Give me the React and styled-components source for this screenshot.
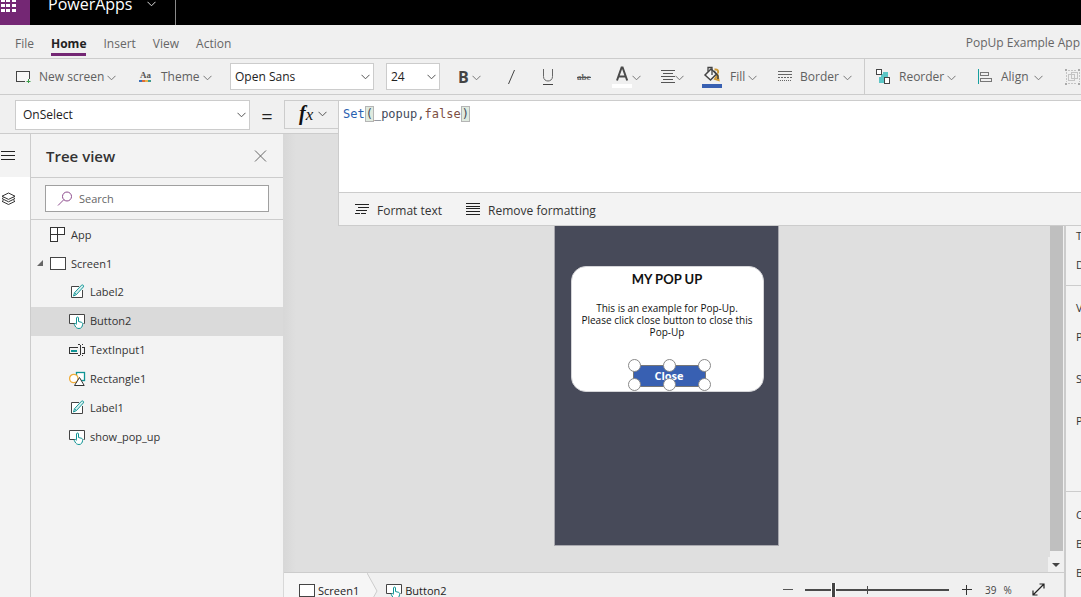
import React from "react";
import styled, { createGlobalStyle } from "styled-components";

const GlobalStyle = createGlobalStyle`
  *, *::before, *::after { box-sizing: border-box; }
  body {
    margin: 0;
    overflow: hidden;
    background: #f0f0f0;
    color: #333;
    font: 12px/16px "Open Sans", "Noto Sans", sans-serif;
  }
  button, select, input { font: inherit; color: inherit; }
  button { border: 0; padding: 0; background: none; cursor: pointer; }
  svg { display: block; flex: none; }
`;

const line = "#cccccc";

const Shell = styled.div`
  display: flex;
  flex-direction: column;
  height: calc(100vh + 12px);
`;

/* ---------- title bar ---------- */

const TitleBar = styled.header`
  display: flex;
  align-items: center;
  flex: none;
  height: 40px;
  margin-top: -15px;
  background: #000;
  color: #fff;
`;

const Waffle = styled.button`
  display: flex;
  align-items: center;
  width: 30px;
  height: 100%;
  background: #742774;
`;

const AppName = styled.button`
  display: flex;
  align-items: center;
  gap: 14px;
  width: 146px;
  height: 100%;
  padding: 0 0 2px 18px;
  border-right: 1px solid #8a8a8a;
  font-size: 16px;
  line-height: 20px;
`;

/* ---------- menu tabs ---------- */

const MenuRow = styled.nav`
  display: flex;
  align-items: flex-start;
  justify-content: space-between;
  flex: none;
  height: 34px;
  padding: 10px 1px 0 15px;
  border-bottom: 1px solid ${line};
  color: #666;
`;

const Tabs = styled.div`
  display: flex;
  gap: 17px;
  padding-top: 1px;
`;

const Tab = styled.a`
  padding-bottom: 1px;
  border-bottom: 3px solid ${(p) => (p.$active ? "#742774" : "transparent")};
  color: ${(p) => (p.$active ? "#222" : "#666")};
  font-weight: ${(p) => (p.$active ? 700 : 400)};
  text-decoration: none;
`;

/* ---------- toolbar ---------- */

const Toolbar = styled.div`
  display: flex;
  align-items: center;
  flex: none;
  gap: 18px;
  height: 36px;
  padding-left: 16px;
  border-bottom: 1px solid ${line};
  color: #606060;
`;

const ToolGroup = styled.div`
  display: flex;
  align-items: center;
  flex: none;
  gap: ${(p) => p.$gap}px;
  height: 100%;
`;

const Divided = styled(ToolGroup)`
  margin-left: -6px;
  padding-left: 11px;
  border-left: 1px solid ${line};
`;

const ToolButton = styled.button`
  display: flex;
  align-items: center;
  flex: none;
  gap: 3px;
  width: ${(p) => p.$w}px;
  height: 28px;
  white-space: nowrap;

  & > svg:first-child { margin-right: 5px; }
  & > svg:last-child:not(:first-child) { margin: 3px 0 0 auto; }
`;

const GlyphButton = styled(ToolButton)`
  gap: 0;
  justify-content: center;
  color: #444;
  font-size: 16px;

  & > svg:first-child { margin-right: 0; }
`;

const SelectBox = styled.span`
  position: relative;
  display: block;
  flex: none;
  width: ${(p) => p.$w}px;
  height: ${(p) => p.$h}px;

  select {
    width: 100%;
    height: 100%;
    padding: 0 18px 0 ${(p) => p.$pad}px;
    border: 1px solid ${line};
    border-radius: 0;
    background: #fff;
    color: #222;
    appearance: none;
  }

  svg {
    position: absolute;
    top: calc(50% - 3px);
    right: 4px;
    pointer-events: none;
  }
`;

/* ---------- formula bar ---------- */

const FormulaRow = styled.div`
  display: flex;
  align-items: flex-start;
  flex: none;
  height: 39px;
  padding: 5px 0 0 15px;
  border-bottom: 1px solid ${line};
`;

const EqualSign = styled.span`
  width: 34px;
  color: #222;
  font-size: 20px;
  line-height: 34px;
  text-align: center;
`;

const FxButton = styled.button`
  display: flex;
  align-items: center;
  gap: 5px;
  width: 54px;
  height: 29px;
  padding: 0 0 2px 14px;
  border: 1px solid ${line};
  border-right: 0;
  color: #111;
  font: italic bold 20px/24px "Liberation Serif", serif;

  small { font-size: 17px; font-weight: 400; }
`;

const FormulaSlot = styled.div`
  position: relative;
  flex: 1;
`;

const FormulaPanel = styled.div`
  position: absolute;
  z-index: 2;
  top: 0;
  left: 0;
  right: 0;
  border: 1px solid ${line};
  border-right: 0;
  background: #f3f3f3;
`;

const Editor = styled.code`
  display: block;
  height: 92px;
  padding: 4px;
  border-bottom: 1px solid ${line};
  background: #fff;
  color: #444a5a;
  font: 12px/18px "DejaVu Sans Mono", "Liberation Mono", monospace;
  outline: none;
`;

const Fn = styled.span`
  color: #2a61b0;
`;

const Literal = styled.span`
  color: #7d4f43;
`;

const Bracket = styled.span`
  border: 1px solid #b5b5b5;
  background: #dfeadf;
`;

const FormatRow = styled.div`
  display: flex;
  gap: 24px;
  height: 32px;
  padding: 3px 0 0 16px;

  button {
    display: flex;
    align-items: center;
    gap: 7px;
  }
  svg { margin-bottom: 3px; }
`;

/* ---------- body ---------- */

const Body = styled.div`
  display: flex;
  flex: 1;
  min-height: 0;
`;

const Rail = styled.nav`
  flex: none;
  width: 31px;
  border-right: 1px solid ${line};
  background: #f3f3f3;
`;

const RailButton = styled.button`
  display: flex;
  align-items: center;
  width: 30px;
  height: 43px;
  background: ${(p) => (p.$active ? "#fff" : "transparent")};
`;

const TreePanel = styled.aside`
  flex: none;
  width: 252px;
  background: #f3f3f3;
`;

const TreeHeader = styled.div`
  display: flex;
  align-items: center;
  justify-content: space-between;
  height: 44px;
  padding: 0 16px 0 15px;
  border-bottom: 1px solid ${line};

  h2 {
    margin: 0;
    font-size: 15px;
    line-height: 20px;
    font-weight: 600;
  }
`;

const SearchArea = styled.div`
  height: 42px;
  padding: 7px 14px;
  border-bottom: 1px solid ${line};
`;

const SearchBox = styled.label`
  display: flex;
  align-items: center;
  gap: 6px;
  height: 27px;
  padding-left: 11px;
  border: 1px solid #a0a0a0;
  background: #fff;

  input {
    flex: 1;
    min-width: 0;
    padding: 0;
    border: 0;
    outline: 0;
    background: none;
    font-size: 11px;
  }
  input::placeholder { color: #666; opacity: 1; }
`;

const Tree = styled.ul`
  margin: 0;
  padding: 0;
  list-style: none;
`;

const TreeItem = styled.button`
  display: flex;
  align-items: center;
  gap: 4px;
  width: 100%;
  height: 29px;
  padding: 0 0 ${(p) => (p.$child ? 2 : 0)}px ${(p) => (p.$child ? 38 : 6)}px;
  background: ${(p) => (p.$selected ? "#dadada" : "transparent")};
  font-size: 11px;
  text-align: left;
`;

const Twisty = styled.span`
  display: block;
  width: 9px;
`;

const Stage = styled.main`
  display: flex;
  flex-direction: column;
  flex: 1;
  min-width: 0;
  border-left: 1px solid #d8d8d8;
`;

const CanvasRow = styled.div`
  display: flex;
  flex: 1;
  min-height: 0;
  background: linear-gradient(90deg, #d8d8d8, #dfdfdf 12px);
`;

const Canvas = styled.div`
  display: flex;
  justify-content: center;
  align-items: flex-start;
  flex: 1;
  padding: 13px 2px 0 0;
`;

const ScrollTrack = styled.div`
  display: flex;
  flex-direction: column;
  flex: none;
  width: 14px;
  background: #f0f0f0;
`;

const ScrollThumb = styled.div`
  flex: 1;
  margin: 0 1px 6px 0;
  background: #bfbfbf;
`;

const ScrollDown = styled.button`
  display: flex;
  align-items: center;
  justify-content: center;
  height: 15px;
  margin-left: -2px;
  background: #f0f0f0;
`;

const Phone = styled.div`
  width: 225px;
  height: 399px;
  padding: 118px 14px 0 16px;
  border: 1px solid #a8a8ae;
  background: #474a59;
`;

const PopUp = styled.section`
  display: flex;
  flex-direction: column;
  align-items: center;
  width: 193px;
  height: 126px;
  border: 1px solid #d5d5d8;
  border-radius: 15px;
  background: #fff;
  color: #111;
  text-align: center;

  h3 {
    margin: 3px 0 14px;
    font: bold 13px/18px Lato, sans-serif;
  }
  p {
    margin: 0 0 27px;
    font-size: 10px;
    line-height: 12px;
    white-space: nowrap;
  }
`;

const Selection = styled.div`
  position: relative;
  margin-left: 4px;
`;

const CloseButton = styled.button`
  display: block;
  width: 73px;
  height: 22px;
  border: 1px solid #777;
  background: #3860b2;
  color: #fff;
  font-size: 11px;
  font-weight: 700;
  line-height: 18px;
`;

const Handle = styled.i`
  position: absolute;
  left: ${(p) => p.$x}%;
  top: ${(p) => p.$y}%;
  width: 13px;
  height: 13px;
  margin: -6px;
  border: 1px solid #888;
  border-radius: 50%;
  background: #fff;
`;

/* ---------- status bar ---------- */

const StatusBar = styled.footer`
  display: flex;
  align-items: stretch;
  justify-content: space-between;
  flex: none;
  height: 37px;
  border-top: 1px solid ${line};
  color: #222;
  font-size: 11px;
`;

const Crumbs = styled.div`
  display: flex;
`;

const Crumb = styled.button`
  display: flex;
  align-items: center;
  gap: 2px;
  padding: 0 ${(p) => (p.$first ? 8 : 0)}px 0 ${(p) => p.$pad}px;
  background: ${(p) => (p.$first ? "#f6f6f6" : "transparent")};
`;

const ZoomTools = styled.div`
  display: flex;
  align-items: center;
  gap: 12px;
  padding: 0 19px 3px 0;
`;

const ZoomSlider = styled.input`
  width: 144px;
  height: 14px;
  margin: 0;
  appearance: none;
  background:
    linear-gradient(#4a4a4a, #4a4a4a) 62px 3px / 1px 8px no-repeat,
    linear-gradient(#4a4a4a, #4a4a4a) 0 6px / 100% 2px no-repeat;

  &::-webkit-slider-thumb {
    appearance: none;
    width: 5px;
    height: 14px;
    border: solid #fff;
    border-width: 0 1px;
    background: #444;
  }
`;

const ZoomValue = styled.span`
  display: flex;
  gap: 7px;
  width: 36px;
  padding-left: 1px;
  color: #444;
  font-size: 10px;
`;

/* ---------- properties strip ---------- */

const Properties = styled.aside`
  flex: none;
  width: 17px;
  overflow: hidden;
  border-left: 2px solid ${line};
  background: #f3f3f3;
`;

const PropGroup = styled.div`
  height: ${(p) => p.$h}px;
  padding: ${(p) => p.$top}px 0 0 10px;
  border-bottom: 1px solid ${line};
  font-size: 11px;
`;

const PropLabel = styled.div`
  margin-bottom: ${(p) => (p.$spaced ? 26 : 13)}px;
`;

/* ---------- icons ---------- */

const Chevron = ({ color = "#777" }) => (
  <svg width="9" height="6" viewBox="0 0 9 6" fill="none" stroke={color}>
    <path d="M.5 .8 4.5 4.8 8.5 .8" />
  </svg>
);

const ScreenIcon = () => (
  <svg width="17" height="14" viewBox="0 0 17 14" shapeRendering="crispEdges">
    <rect x=".5" y=".5" width="15" height="12" fill="#fff" stroke="#444" />
  </svg>
);

const AppIcon = () => (
  <svg width="17" height="16" viewBox="0 0 17 16" fill="#fff" stroke="#333" shapeRendering="crispEdges">
    <path d="M.5 .5h14v7h-14zM.5 7.5h7v7h-7zM7.5 .5v7" />
  </svg>
);

const LabelIcon = () => (
  <svg width="17" height="15" viewBox="0 0 17 15" fill="none">
    <path d="M10 2.500H2.500v11h11V6" fill="#fff" stroke="#444" />
    <path d="M4.500 12l1-3.300L12.500 1.200c1.200-.9 2.700.4 1.900 1.700L7.400 10.600z" fill="#d5eeee" stroke="#1a9a9a" />
    <path d="M5.500 8.700l1.900 1.900" stroke="#1a9a9a" />
  </svg>
);

const ButtonIcon = () => (
  <svg width="17" height="16" viewBox="0 0 17 16" fill="none">
    <path d="M6 10.500H.5v-9h15v9h-1" fill="#fff" stroke="#444" />
    <path d="M7.500 10.500V5c0-1.300 2-1.300 2 0v3.500l3 .8c1 .3 1.300 1 1.100 2-.2 2.500-1.300 4.200-3.600 4.200-2 0-3.100-1-3.900-2.500l-.8-1.500c0-1.300 1.500-1.200 2.200-.3z" fill="#fff" stroke="#0f9494" />
  </svg>
);

const TextInputIcon = () => (
  <svg width="17" height="14" viewBox="0 0 17 14" fill="none" stroke="#333" shapeRendering="crispEdges">
    <path d="M9 4.500H.5v6H9M13 4.500h2.500v6H13M11.500 2v10M9 1.500h1.500M12.500 1.500H14M9 12.500h1.500M12.500 12.500H14" />
    <path d="M2 7.500h6" stroke="#0f9494" strokeWidth="2" />
  </svg>
);

const ShapeIcon = () => (
  <svg width="17" height="16" viewBox="0 0 17 16" fill="none">
    <rect x="7.500" y="1.500" width="8" height="8" fill="#fff" stroke="#0f9494" strokeWidth="1.300" />
    <circle cx="4.800" cy="7.500" r="4.200" fill="#fff" stroke="#f0ad3a" strokeWidth="1.300" />
    <path d="M10.500 6.500 15.200 14.500H5.500z" fill="#fff" stroke="#333" />
  </svg>
);

const WaffleIcon = () => (
  <svg width="17" height="16" viewBox="0 0 17 16" fill="#fff" shapeRendering="crispEdges">
    {[1, 6, 12].map((x) => [2, 7, 12].map((y) => (
      <rect key={`${x}-${y}`} x={x} y={y} width="4" height="3" />
    )))}
  </svg>
);

const NewScreenIcon = () => (
  <svg width="15" height="13" viewBox="0 0 15 13" fill="none">
    <path d="M9 11.500H.5v-10h13V9" fill="#f7f7f7" stroke="#444" shapeRendering="crispEdges" />
    <path d="M12.500 9v4M10.500 11.500h4" stroke="#3d9f4a" />
  </svg>
);

const ThemeIcon = () => (
  <svg width="14" height="13" viewBox="0 0 14 13">
    <text x="1" y="8" fontFamily="Liberation Serif, serif" fontSize="9" fontWeight="700" fill="#555">Aa</text>
    <path d="M0 10h3v2H0z" fill="#3c6fb5" />
    <path d="M3 10h3v2H3z" fill="#dd6b3a" />
    <path d="M6 10h3v2H6z" fill="#e9b44c" />
    <path d="M9 10h3v2H9z" fill="#3f9b8f" />
  </svg>
);

const ItalicIcon = () => (
  <svg width="9" height="16" viewBox="0 0 9 16" stroke="#444">
    <path d="M7.500 1 1.500 15" />
  </svg>
);

const UnderlineIcon = () => (
  <svg width="12" height="16" viewBox="0 0 12 16" fill="none" stroke="#666">
    <path d="M1.500 0v7.500c0 6 9 6 9 0V0" />
    <path d="M1 15.500h10" stroke="#444" />
  </svg>
);

const StrikeIcon = () => (
  <svg width="15" height="12" viewBox="0 0 15 12">
    <text x="0" y="9" fontSize="9" fontFamily="Liberation Serif, serif" fontWeight="700" fill="#666">abc</text>
    <path d="M0 6.500h14" stroke="#555" />
  </svg>
);

const FontColorIcon = () => (
  <svg width="20" height="22" viewBox="0 0 20 22">
    <path d="M0 18h20v4H0z" fill="#fff" />
    <path d="M5 14.500 9.600 1.500h1l4.600 13M6.600 10.500h7" fill="none" stroke="#4a4a4a" strokeWidth="2" />
  </svg>
);

const AlignTextIcon = () => (
  <svg width="14" height="13" viewBox="0 0 14 13" stroke="#555" shapeRendering="crispEdges">
    <path d="M0 .5h14M2 3.500h10M0 6.500h14M2 9.500h10M0 12.500h14" />
  </svg>
);

const FillIcon = () => (
  <svg width="20" height="22" viewBox="0 0 20 22" fill="none">
    <path d="M0 18h20v4H0z" fill="#3860b2" />
    <path d="M12.500 3.500c3-.5 4 1 3.500 3.500M13 13l2.500-4 1 5z" stroke="#d09a35" strokeWidth="2" />
    <path d="M3 9 9 3l5.500 5-6 6z" fill="#f5f5f5" stroke="#444" strokeWidth="1.500" />
    <path d="M6 5.500V1.500h4V9" stroke="#444" strokeWidth="1.300" />
    <path d="M12 5l4 5v3" stroke="#444" strokeWidth="1.500" />
  </svg>
);

const BorderIcon = () => (
  <svg width="14" height="11" viewBox="0 0 14 11" stroke="#666" shapeRendering="crispEdges">
    <path d="M0 .5h14M0 3.500h14" />
    <path d="M0 6.500h14" strokeDasharray="2 1" />
    <path d="M0 9.500h14" strokeDasharray="1 1" />
  </svg>
);

const ReorderIcon = () => (
  <svg width="15" height="15" viewBox="0 0 15 15" shapeRendering="crispEdges">
    <path d="M7 3h5v5H7zM3 8h5v6H3z" fill="#5cc6c6" />
    <path d="M5 5h5v6H5z" fill="#5cc6c6" />
    <path d="M.5 .5h5v5h-5zM8.500 8.500h5v6h-5z" fill="#fff" stroke="#444" />
  </svg>
);

const AlignIcon = () => (
  <svg width="15" height="15" viewBox="0 0 15 15" fill="none" shapeRendering="crispEdges">
    <path d="M0 0h1v15H0z" fill="#16a0a0" />
    <path d="M2.500 3.500h8v3h-8zM2.500 9.500h11v3h-11z" stroke="#777" />
  </svg>
);

const GroupIcon = () => (
  <svg width="16" height="16" viewBox="0 0 16 16" fill="none" stroke="#c4c4c4" shapeRendering="crispEdges">
    <path d="M3 1.500h9M3 14.500h9M1.500 3v10M14.500 3v10" strokeDasharray="2 1" />
    <path d="M3.500 5.500h6v6h-6zM6.500 3.500h6v6h-6z" />
    <path d="M0 0h2v2H0zM13 0h2v2h-2zM0 14h2v2H0zM13 14h2v2h-2z" fill="#aaa" stroke="none" />
  </svg>
);

const FormatIcon = () => (
  <svg width="15" height="11" viewBox="0 0 15 11" stroke="#222" shapeRendering="crispEdges">
    <path d="M0 .5h14M3 3.500h11M1 6.500h11M0 9.500h5M6 9.500h5" />
  </svg>
);

const RemoveFormatIcon = () => (
  <svg width="15" height="13" viewBox="0 0 15 13" stroke="#222" shapeRendering="crispEdges">
    <path d="M0 .5h14M0 3.500h14M0 5.500h14M0 8.500h14M0 11.500h14" />
  </svg>
);

const MenuIcon = () => (
  <svg width="15" height="10" viewBox="0 0 15 10" stroke="#222" shapeRendering="crispEdges">
    <path d="M1 .5h14M1 4.500h14M1 8.500h14" />
  </svg>
);

const LayersIcon = () => (
  <svg width="16" height="14" viewBox="0 0 16 14" fill="none" stroke="#333">
    <path d="M8.500 1 15 4.200 8.500 7.400 2 4.200z" />
    <path d="M3.500 5.600 2 6.600l6.500 3.200L15 6.600l-1.500-1M3.500 8.400 2 9.300l6.500 3.200L15 9.300l-1.500-.9" />
  </svg>
);

const SearchIcon = () => (
  <svg width="16" height="16" viewBox="0 0 16 16" fill="none" stroke="#8d4b8d">
    <circle cx="10" cy="5.500" r="4.500" />
    <path d="M6.800 8.700 1 14.500" />
  </svg>
);

const CloseIcon = () => (
  <svg width="13" height="12" viewBox="0 0 13 12" stroke="#666">
    <path d="M1 .5l11 11M12 .5l-11 11" />
  </svg>
);

const CrumbArrow = () => (
  <svg width="12" height="36" viewBox="0 0 12 36">
    <path d="M0 0 10 18 0 36z" fill="#f6f6f6" />
    <path d="M0 0 10 18 0 36" fill="none" stroke="#ccc" />
  </svg>
);

const treeItems = [
  { name: "Label2", Icon: LabelIcon },
  { name: "Button2", Icon: ButtonIcon, selected: true },
  { name: "TextInput1", Icon: TextInputIcon },
  { name: "Rectangle1", Icon: ShapeIcon },
  { name: "Label1", Icon: LabelIcon },
  { name: "show_pop_up", Icon: ButtonIcon },
];

const handles = [[2, 0], [50, 0], [98, 0], [2, 88], [50, 88], [98, 88]];

const Dropdown = ({ label, value, width, height, pad = 4 }) => (
  <SelectBox $w={width} $h={height} $pad={pad}>
    <select aria-label={label} defaultValue={value}>
      <option>{value}</option>
    </select>
    <Chevron color="#555" />
  </SelectBox>
);

export default function App() {
  return (
    <Shell>
      <GlobalStyle />
      <TitleBar>
        <Waffle aria-label="App launcher"><WaffleIcon /></Waffle>
        <AppName>PowerApps <Chevron color="#ddd" /></AppName>
      </TitleBar>

      <MenuRow>
        <Tabs>
          {["File", "Home", "Insert", "View", "Action"].map((t) => (
            <Tab key={t} href="#" $active={t === "Home"}>{t}</Tab>
          ))}
        </Tabs>
        <span>PopUp Example App</span>
      </MenuRow>

      <Toolbar>
        <ToolGroup $gap={23}>
          <ToolButton $w={100}><NewScreenIcon />New screen<Chevron /></ToolButton>
          <ToolButton $w={73}><ThemeIcon />Theme<Chevron /></ToolButton>
        </ToolGroup>
        <ToolGroup $gap={12}>
          <Dropdown label="Font" value="Open Sans" width={144} height={27} />
          <Dropdown label="Font size" value="24" width={54} height={27} />
        </ToolGroup>
        <ToolGroup $gap={22}>
          <GlyphButton $w={23} aria-label="Bold"><b>B</b><Chevron /></GlyphButton>
          <GlyphButton $w={16} aria-label="Italic"><ItalicIcon /></GlyphButton>
          <GlyphButton $w={14} aria-label="Underline"><UnderlineIcon /></GlyphButton>
          <GlyphButton $w={14} aria-label="Strikethrough"><StrikeIcon /></GlyphButton>
          <GlyphButton $w={26} aria-label="Font color"><FontColorIcon /><Chevron /></GlyphButton>
          <GlyphButton $w={23} aria-label="Text alignment"><AlignTextIcon /><Chevron /></GlyphButton>
        </ToolGroup>
        <ToolGroup $gap={22}>
          <ToolButton $w={54}><FillIcon />Fill<Chevron /></ToolButton>
          <ToolButton $w={74}><BorderIcon />Border<Chevron /></ToolButton>
        </ToolGroup>
        <Divided $gap={22}>
          <ToolButton $w={80}><ReorderIcon />Reorder<Chevron /></ToolButton>
          <ToolButton $w={65}><AlignIcon />Align<Chevron /></ToolButton>
          <ToolButton $w={16} aria-label="Group"><GroupIcon /></ToolButton>
        </Divided>
      </Toolbar>

      <FormulaRow>
        <Dropdown label="Property" value="OnSelect" width={235} height={30} pad={7} />
        <EqualSign>=</EqualSign>
        <FxButton aria-label="Function"><span>f<small>x</small></span><Chevron color="#555" /></FxButton>
        <FormulaSlot>
          <FormulaPanel>
            <Editor role="textbox" aria-label="Formula" contentEditable suppressContentEditableWarning spellCheck={false}>
              <Fn>Set</Fn><Bracket>(</Bracket>_popup,<Literal>false</Literal><Bracket>)</Bracket>
            </Editor>
            <FormatRow>
              <button><FormatIcon />Format text</button>
              <button><RemoveFormatIcon />Remove formatting</button>
            </FormatRow>
          </FormulaPanel>
        </FormulaSlot>
      </FormulaRow>

      <Body>
        <Rail>
          <RailButton aria-label="Menu"><MenuIcon /></RailButton>
          <RailButton $active aria-label="Tree view"><LayersIcon /></RailButton>
        </Rail>
        <TreePanel>
          <TreeHeader>
            <h2>Tree view</h2>
            <button aria-label="Close panel"><CloseIcon /></button>
          </TreeHeader>
          <SearchArea>
            <SearchBox>
              <SearchIcon />
              <input aria-label="Search" placeholder="Search" />
            </SearchBox>
          </SearchArea>
          <Tree>
            <li><TreeItem><Twisty /><AppIcon />App</TreeItem></li>
            <li>
              <TreeItem>
                <Twisty>
                  <svg width="7" height="7" viewBox="0 0 7 7"><path d="M6 0v6H0z" fill="#666" /></svg>
                </Twisty>
                <ScreenIcon />Screen1
              </TreeItem>
            </li>
            {treeItems.map(({ name, Icon, selected }) => (
              <li key={name}><TreeItem $child $selected={selected}><Icon />{name}</TreeItem></li>
            ))}
          </Tree>
        </TreePanel>

        <Stage>
          <CanvasRow>
            <Canvas>
              <Phone>
                <PopUp>
                  <h3>MY POP UP</h3>
                  <p>
                    This is an example for Pop-Up.<br />
                    Please click close button to close this<br />
                    Pop-Up
                  </p>
                  <Selection>
                    <CloseButton>Close</CloseButton>
                    {handles.map(([x, y]) => <Handle key={`${x}-${y}`} $x={x} $y={y} />)}
                  </Selection>
                </PopUp>
              </Phone>
            </Canvas>
            <ScrollTrack>
              <ScrollThumb />
              <ScrollDown aria-label="Scroll down">
                <svg width="8" height="4" viewBox="0 0 8 4"><path d="M0 0h8L4 4z" fill="#444" /></svg>
              </ScrollDown>
            </ScrollTrack>
          </CanvasRow>
          <StatusBar>
            <Crumbs>
              <Crumb $first $pad={15}><ScreenIcon />Screen1</Crumb>
              <CrumbArrow />
              <Crumb $pad={7}><ButtonIcon />Button2</Crumb>
            </Crumbs>
            <ZoomTools>
              <button aria-label="Zoom out">
                <svg width="10" height="11" viewBox="0 0 10 11" stroke="#555" shapeRendering="crispEdges"><path d="M0 5.500h10" /></svg>
              </button>
              <ZoomSlider type="range" aria-label="Zoom" min="0" max="100" defaultValue="19" />
              <button aria-label="Zoom in">
                <svg width="11" height="11" viewBox="0 0 11 11" stroke="#333" shapeRendering="crispEdges"><path d="M1 5.500h10M5.500 1v10" /></svg>
              </button>
              <ZoomValue><span>39</span><span>%</span></ZoomValue>
              <button aria-label="Fit to window">
                <svg width="13" height="13" viewBox="0 0 13 13" fill="none" stroke="#222" strokeWidth="1.200">
                  <path d="M1 12 12 1M7.500 1H12v4.500M1 7.500V12h4.500" />
                </svg>
              </button>
            </ZoomTools>
          </StatusBar>
        </Stage>

        <Properties>
          <PropGroup $h={152} $top={94}>
            <PropLabel>T</PropLabel>
            <PropLabel>D</PropLabel>
          </PropGroup>
          <PropGroup $h={206} $top={14}>
            <PropLabel>V</PropLabel>
            <PropLabel $spaced>P</PropLabel>
            <PropLabel $spaced>S</PropLabel>
            <PropLabel>P</PropLabel>
          </PropGroup>
          <PropGroup $h={160} $top={15}>
            <PropLabel>C</PropLabel>
            <PropLabel>B</PropLabel>
            <PropLabel>B</PropLabel>
          </PropGroup>
        </Properties>
      </Body>
    </Shell>
  );
}
